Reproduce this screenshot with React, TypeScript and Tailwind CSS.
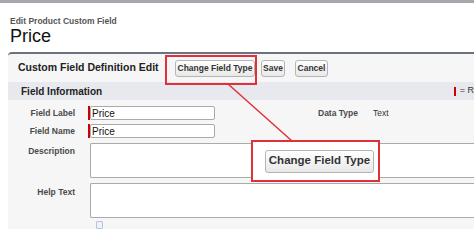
import React from "react";

function Btn({ children, className = "" }: { children: React.ReactNode; className?: string }) {
  return (
    <div
      className={
        "flex items-center justify-center whitespace-nowrap rounded-[3px] border border-[#b5b5b5] bg-gradient-to-b from-[#ffffff] to-[#e8e8e8] font-bold text-[#333] " +
        className
      }
    >
      {children}
    </div>
  );
}

export default function App() {
  return (
    <div
      className="relative h-[229px] w-[474px] overflow-hidden bg-white"
      style={{ fontFamily: '"Liberation Sans", Arial, sans-serif' }}
    >
      <div className="h-[3px] bg-[#a5a8ac]" />
      <div className="pl-[10px] pt-[13px]">
        <div className="text-[8.5px] font-bold leading-[11px] text-[#555]">Edit Product Custom Field</div>
        <div className="text-[18px] leading-[18px] text-[#111]">Price</div>
      </div>
      <div className="ml-[8px] mt-[7px] rounded-tl-[4px] border-t-2 border-[#6b7380] bg-[#f6f6f6]">
        <div className="flex h-[28px] items-center pl-[10px]">
          <div className="w-[157px] whitespace-nowrap text-[10.5px] font-bold text-[#222]">Custom Field Definition Edit</div>
          <div className="flex items-center">
            <Btn className="h-[17px] w-[80px] text-[8.5px]">Change Field Type</Btn>
            <Btn className="ml-[6px] h-[17px] w-[24px] text-[8.5px]">Save</Btn>
            <Btn className="ml-[10px] h-[17px] w-[33px] text-[8.5px]">Cancel</Btn>
          </div>
        </div>
        <div className="flex h-[18px] items-center justify-between bg-[#e7e9ef] pl-[13px]">
          <div className="text-[10px] font-bold text-[#222]">Field Information</div>
          <div className="flex items-center gap-[4px] text-[9px] text-[#333]">
            <div className="h-[9px] w-[2px] bg-[#c00]" />
            <span>= R</span>
          </div>
        </div>
        <div className="pt-[4px]">
          <div className="flex h-[18px] items-center">
            <div className="w-[67px] whitespace-nowrap text-right text-[8.5px] font-bold text-[#4a4a4a]">Field Label</div>
            <div className="ml-[13px] flex h-[14px] w-[127px] items-stretch">
              <div className="w-[2px] bg-[#c00]" />
              <div className="flex flex-1 items-center rounded-[2px] border border-[#aaa] bg-white pl-[1px] text-[10px] text-[#111]">Price</div>
            </div>
            <div className="ml-[103px] whitespace-nowrap text-[8.5px] font-bold text-[#4a4a4a]">Data Type</div>
            <div className="ml-[15px] text-[8.5px] text-[#333]">Text</div>
          </div>
          <div className="flex h-[18px] items-center">
            <div className="w-[67px] whitespace-nowrap text-right text-[8.5px] font-bold text-[#4a4a4a]">Field Name</div>
            <div className="ml-[13px] flex h-[14px] w-[127px] items-stretch">
              <div className="w-[2px] bg-[#c00]" />
              <div className="flex flex-1 items-center rounded-[2px] border border-[#aaa] bg-white pl-[1px] text-[10px] text-[#111]">Price</div>
            </div>
          </div>
          <div className="mt-[3px] flex">
            <div className="w-[67px] pt-[2px] text-right text-[8.5px] font-bold text-[#4a4a4a]">Description</div>
            <div className="ml-[15px] h-[35px] flex-1 rounded-l-[2px] border border-r-0 border-[#aaa] bg-white" />
          </div>
          <div className="mt-[5px] flex">
            <div className="w-[67px] pt-[3px] text-right text-[8.5px] font-bold text-[#4a4a4a]">Help Text</div>
            <div className="ml-[15px] h-[35px] flex-1 rounded-l-[2px] border border-r-0 border-[#aaa] bg-white" />
          </div>
          <div className="ml-[88px] mt-[3px] h-[8px] w-[7px] rounded-[1px] border border-[#b8c4d8] bg-[#eef2f8]" />
        </div>
      </div>

      {/* small highlight box */}
      <div className="absolute left-[165px] top-[55px] h-[30px] w-[92px] border-2 border-[#e0313a]" />
      {/* connector */}
      <svg className="absolute left-0 top-0" width="474" height="229">
        <line x1="228" y1="84" x2="292" y2="141" stroke="#e0313a" strokeWidth="1.5" />
      </svg>
      {/* callout */}
      <div className="absolute left-[251px] top-[140px] flex h-[42px] w-[129px] items-center border-2 border-[#e0313a] bg-white pl-[12px]">
        <Btn className="h-[23px] w-[109px] text-[11.5px]">Change Field Type</Btn>
      </div>
    </div>
  );
}
